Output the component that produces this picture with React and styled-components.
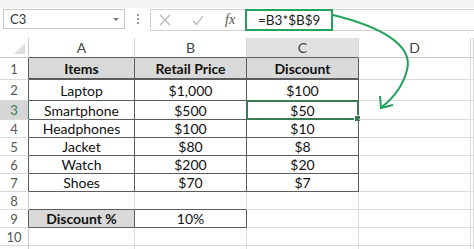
import styled, { createGlobalStyle } from "styled-components";

const GlobalStyle = createGlobalStyle`
  body {
    margin: 0;
    background: #ffffff;
    font-family: Lato, "Liberation Sans", sans-serif;
  }
`;

const DARK = "#5c5c5c";
const LIGHT = "#dadada";

const columns = ["A", "B", "C", "D", ""];

const rows = [
  { n: 1, cells: ["Items", "Retail Price", "Discount"], head: true, boxed: 3 },
  { n: 2, cells: ["Laptop", "$1,000", "$100"], boxed: 3 },
  { n: 3, cells: ["Smartphone", "$500", "$50"], boxed: 3, active: true },
  { n: 4, cells: ["Headphones", "$100", "$10"], boxed: 3 },
  { n: 5, cells: ["Jacket", "$80", "$8"], boxed: 3 },
  { n: 6, cells: ["Watch", "$200", "$20"], boxed: 3 },
  { n: 7, cells: ["Shoes", "$70", "$7"], boxed: 3 },
  { n: 8, cells: [], under: 2 },
  { n: 9, cells: ["Discount %", "10%"], boxed: 2, label: true },
  { n: 10, cells: [] },
  { n: "", cells: [] },
];

const Page = styled.div`
  position: relative;
  width: 474px;
  height: 249px;
  overflow: hidden;
`;

const Ribbon = styled.div`
  height: 8px;
  background: #f3f3f3;
`;

const FormulaBar = styled.div`
  height: 30px;
  display: flex;
  align-items: flex-start;
  padding-top: 1px;
  box-sizing: border-box;
`;

const NameBox = styled.div`
  margin-left: 3px;
  width: 122px;
  height: 20px;
  box-sizing: border-box;
  border: 1px solid #c8c8c8;
  display: flex;
  align-items: center;
  justify-content: space-between;
  padding: 0 5px 0 6px;
  font-size: 13px;
  color: #333;
`;

const DropArrow = styled.span`
  width: 0;
  height: 0;
  border-left: 3px solid transparent;
  border-right: 3px solid transparent;
  border-top: 3px solid #777;
`;

const Dots = styled.div`
  width: 25px;
  height: 20px;
  display: flex;
  flex-direction: column;
  align-items: center;
  justify-content: center;
  gap: 2px;

  span {
    width: 2px;
    height: 2px;
    background: #9a9a9a;
  }
`;

const FormulaBox = styled.div`
  flex: 1;
  height: 22px;
  box-sizing: border-box;
  border: 1px solid #d0d0d0;
  border-right: none;
  display: flex;
  align-items: stretch;
`;

const Tools = styled.div`
  width: 94px;
  display: flex;
  align-items: center;
  gap: 0;
  padding-left: 8px;
  box-sizing: border-box;
`;

const ToolIcon = styled.span`
  width: 33px;
  display: flex;
  align-items: center;
`;

const Fx = styled.span`
  font-family: "Liberation Serif", serif;
  font-style: italic;
  font-size: 14px;
  color: #555;
`;

const Formula = styled.div`
  width: 88px;
  margin: -1px 0;
  box-sizing: border-box;
  border: 2px solid #21a35a;
  display: flex;
  align-items: center;
  padding-left: 11px;
  font-size: 13.5px;
  color: #222;
`;

const Grid = styled.div`
  display: grid;
  grid-template-columns: 29px 106px 112px 112px 112px 3px;
  grid-template-rows: 20px 22px 21px 19px repeat(7, 18px) 4px;
`;

const Cell = styled.div`
  position: relative;
  box-sizing: border-box;
  display: flex;
  align-items: center;
  justify-content: center;
  font-size: 14px;
  color: #111;
  white-space: nowrap;
  border-right: 1px solid ${(p) => (p.$darkRight ? DARK : LIGHT)};
  border-bottom: ${(p) => (p.$thick ? 2 : 1)}px solid
    ${(p) => (p.$darkBottom ? DARK : LIGHT)};
  background: ${(p) => (p.$fill ? "#d9d9d9" : "transparent")};
  font-weight: ${(p) => (p.$bold ? 700 : 400)};
`;

const ColHead = styled(Cell)`
  font-size: 14px;
  color: #444;
  background: ${(p) => (p.$active ? "#e1e1e1" : "#ffffff")};
  border-right-color: #d4d4d4;
  border-bottom-color: ${(p) => (p.$darkBottom ? DARK : "#c8c8c8")};
`;

const RowHead = styled(Cell)`
  font-size: 13px;
  color: ${(p) => (p.$active ? "#3a7a55" : "#555")};
  background: ${(p) => (p.$active ? "#d6d6d6" : "#ffffff")};
  border-right: 1px solid
    ${(p) => (p.$active ? "#3a7a55" : p.$darkRight ? DARK : "#c8c8c8")};
`;

const Corner = styled.div`
  box-sizing: border-box;
  border-right: 1px solid #c8c8c8;
  border-bottom: 1px solid #c8c8c8;
  display: flex;
  align-items: flex-end;
  justify-content: flex-end;
  padding: 0 3px 3px 0;

  &::after {
    content: "";
    width: 0;
    height: 0;
    border-left: 11px solid transparent;
    border-bottom: 11px solid #dedede;
  }
`;

const Selection = styled.span`
  position: absolute;
  inset: -1px -1px -1px -1px;
  border: 2px solid #3a7a55;

  &::after {
    content: "";
    position: absolute;
    right: -4px;
    bottom: -4px;
    width: 5px;
    height: 5px;
    background: #3a7a55;
    border: 1px solid #fff;
  }
`;

const Arrow = styled.svg`
  position: absolute;
  left: 0;
  top: 0;
  pointer-events: none;
`;

const App = () => {
  return (
    <Page>
      <GlobalStyle />
      <Ribbon />
      <FormulaBar>
        <NameBox>
          C3
          <DropArrow />
        </NameBox>
        <Dots>
          <span />
          <span />
          <span />
        </Dots>
        <FormulaBox>
          <Tools>
            <ToolIcon>
              <svg width="12" height="12" viewBox="0 0 12 12">
                <path d="M1 1L11 11M11 1L1 11" stroke="#b5b5b5" strokeWidth="1.2" fill="none" />
              </svg>
            </ToolIcon>
            <ToolIcon>
              <svg width="12" height="12" viewBox="0 0 12 12">
                <path d="M1 7L4.5 10.5L11 2" stroke="#b5b5b5" strokeWidth="1.2" fill="none" />
              </svg>
            </ToolIcon>
            <Fx>fx</Fx>
          </Tools>
          <Formula>=B3*$B$9</Formula>
        </FormulaBox>
      </FormulaBar>

      <Grid>
        <Corner />
        {columns.map((c, i) => (
          <ColHead key={i} $active={c === "C"} $darkBottom={i < 3}>
            {c}
          </ColHead>
        ))}
        {rows.map((r, ri) => (
          <Row key={ri} row={r} />
        ))}
      </Grid>

      <Arrow width="474" height="249" viewBox="0 0 474 249">
        <path
          d="M333 15 C 378 26 414 44 407 70 C 403 86 392 99 382 107"
          stroke="#21a35a"
          strokeWidth="2"
          fill="none"
        />
        <path
          d="M380 96 L381 108 L393 105"
          stroke="#21a35a"
          strokeWidth="2"
          fill="none"
          strokeLinejoin="miter"
        />
      </Arrow>
    </Page>
  );
};

const Row = ({ row }) => {
  const boxed = row.boxed || 0;
  return (
    <>
      <RowHead $active={row.active} $darkRight={boxed > 0}>
        {row.n}
      </RowHead>
      {[0, 1, 2, 3, 4].map((ci) => {
        const inBox = ci < boxed;
        const text = row.cells[ci] || "";
        return (
          <Cell
            key={ci}
            $darkRight={inBox}
            $darkBottom={inBox || ci < (row.under || 0)}
            $thick={row.head && inBox}
            $fill={(row.head && inBox) || (row.label && ci === 0)}
            $bold={row.head || (row.label && ci === 0)}
          >
            {text}
            {row.active && ci === 2 && <Selection />}
          </Cell>
        );
      })}
    </>
  );
};

export default App;
